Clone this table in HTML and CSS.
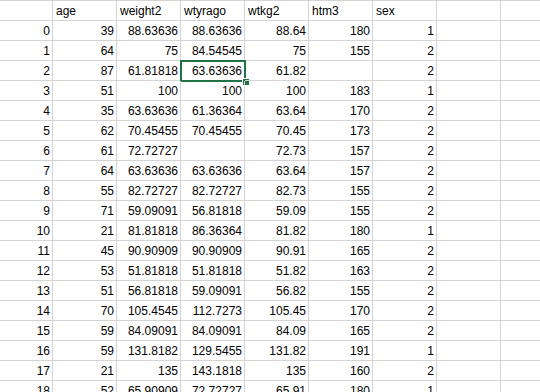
FILE: index.html
```html
<!DOCTYPE html>
<html lang="en">
<head>
    <meta charset="UTF-8">
    <title>Sheet1</title>
    <link rel="stylesheet" href="styles.css">
</head>
<body>

<div class="sheet">
    <div class="row head">
        <div class="cell"></div>
        <div class="cell txt">age</div>
        <div class="cell txt">weight2</div>
        <div class="cell txt">wtyrago</div>
        <div class="cell txt">wtkg2</div>
        <div class="cell txt">htm3</div>
        <div class="cell txt">sex</div>
        <div class="cell"></div>
        <div class="cell"></div>
    </div>
</div>

<script>
    const rows = [
        [0, 39, '88.63636', '88.63636', '88.64', 180, 1],
        [1, 64, '75', '84.54545', '75', 155, 2],
        [2, 87, '61.81818', '63.63636', '61.82', '', 2],
        [3, 51, '100', '100', '100', 183, 1],
        [4, 35, '63.63636', '61.36364', '63.64', 170, 2],
        [5, 62, '70.45455', '70.45455', '70.45', 173, 2],
        [6, 61, '72.72727', '', '72.73', 157, 2],
        [7, 64, '63.63636', '63.63636', '63.64', 157, 2],
        [8, 55, '82.72727', '82.72727', '82.73', 155, 2],
        [9, 71, '59.09091', '56.81818', '59.09', 155, 2],
        [10, 21, '81.81818', '86.36364', '81.82', 180, 1],
        [11, 45, '90.90909', '90.90909', '90.91', 165, 2],
        [12, 53, '51.81818', '51.81818', '51.82', 163, 2],
        [13, 51, '56.81818', '59.09091', '56.82', 155, 2],
        [14, 70, '105.4545', '112.7273', '105.45', 170, 2],
        [15, 59, '84.09091', '84.09091', '84.09', 165, 2],
        [16, 59, '131.8182', '129.5455', '131.82', 191, 1],
        [17, 21, '135', '143.1818', '135', 160, 2],
        [18, 52, '65.90909', '72.72727', '65.91', 180, 1]
    ];

    const sheet = document.querySelector('.sheet');

    rows.forEach((r, i) => {
        const row = document.createElement('div');
        row.className = 'row';
        r.concat(['', '']).forEach((v, j) => {
            const cell = document.createElement('div');
            cell.className = 'cell';
            cell.textContent = v;
            if (i === 2 && j === 3) {
                const sel = document.createElement('span');
                sel.className = 'sel';
                cell.appendChild(sel);
            }
            row.appendChild(cell);
        });
        sheet.appendChild(row);
    });
</script>

</body>
</html>
```

FILE: styles.css
```css
body {
    margin: 0;
    background: #fff;
    overflow: hidden;
    font-family: 'Liberation Sans', Arial, sans-serif;
    font-size: 12px;
    color: #000;
}

.sheet {
    width: 565px;
}

.row {
    display: grid;
    grid-template-columns: 53px repeat(8, 64px);
}

.cell {
    box-sizing: border-box;
    height: 20px;
    line-height: 19px;
    padding: 1px 2px 0 3px;
    border-right: 1px solid #d4d4d4;
    border-bottom: 1px solid #d4d4d4;
    text-align: right;
    white-space: nowrap;
    position: relative;
}

.head .cell {
    height: 21px;
    border-top: 1px solid #d4d4d4;
}

.cell.txt {
    text-align: left;
}

/* selected cell outline + fill handle */
.sel {
    position: absolute;
    left: -1px;
    top: -1px;
    right: -2px;
    bottom: -2px;
    border: 2px solid #217346;
}

.sel::after {
    content: '';
    position: absolute;
    right: -5px;
    bottom: -5px;
    width: 6px;
    height: 6px;
    background: #217346;
    border: 1px solid #fff;
    border-width: 1px 0 0 1px;
}
```
